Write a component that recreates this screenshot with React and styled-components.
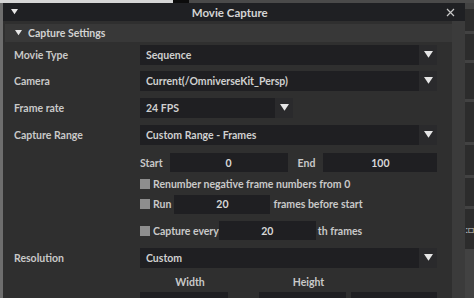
import React from "react";
import styled, { createGlobalStyle } from "styled-components";

const Global = createGlobalStyle`
  html, body {
    margin: 0;
    padding: 0;
    background: #3a3a3a;
    overflow: hidden;
  }
  body {
    font-family: "Lato", "Open Sans", sans-serif;
  }
`;

const Page = styled.div`
  width: 474px;
  height: 298px;
  display: flex;
  flex-direction: column;
  overflow: hidden;
`;

const TopStrip = styled.div`
  height: 3px;
  flex-shrink: 0;
  display: flex;
  > div:nth-child(1) {
    width: 173px;
    background: #d6d6d6;
  }
  > div:nth-child(2) {
    width: 16px;
    background: #0c0c0c;
  }
  > div:nth-child(3) {
    flex: 1;
    background: #4a4a4a;
  }
`;

const Main = styled.div`
  flex: 1;
  display: flex;
  min-height: 0;
`;

const Window = styled.div`
  width: 463px;
  display: flex;
  flex-direction: column;
  border-left: 3px solid #6e6e6e;
`;

const TitleBar = styled.div`
  height: 18px;
  flex-shrink: 0;
  background: #1f2023;
  display: flex;
  align-items: center;
  padding: 0 10px 0 8px;
  color: #d4d4d4;
  font-size: 11.5px;
  font-weight: 700;
`;

const TitleText = styled.div`
  flex: 1;
  text-align: center;
  padding-right: 4px;
`;

const Close = styled.div`
  width: 10px;
  height: 10px;
  display: flex;
  align-items: center;
  justify-content: center;
`;

const Body = styled.div`
  flex: 1;
  display: flex;
  background: #2f2f2f;
  min-height: 0;
  overflow: hidden;
`;

const Content = styled.div`
  flex: 1;
  padding: 3px 0 0 2px;
  display: flex;
  flex-direction: column;
`;

const ScrollTrack = styled.div`
  width: 13px;
  background: #3b3b3b;
`;

const SectionHeader = styled.div`
  height: 18px;
  flex-shrink: 0;
  background: #383838;
  display: flex;
  align-items: center;
  gap: 6px;
  padding-left: 10px;
  color: #d2d2d2;
  font-size: 10.5px;
  font-weight: 700;
`;

const Form = styled.div`
  display: grid;
  grid-template-columns: 126px 297px;
  padding-left: 9px;
  flex-shrink: 0;
`;

const Label = styled.div`
  height: ${(p) => p.h || 27}px;
  display: flex;
  align-items: center;
  color: #c9c9c9;
  font-size: 10.5px;
  font-weight: 700;
`;

const Cell = styled.div`
  height: ${(p) => p.h || 27}px;
  display: flex;
  align-items: center;
`;

const Select = styled.div`
  width: ${(p) => p.w || 297}px;
  height: 20px;
  display: flex;
  background: #1f1f22;
  color: #d0d0d0;
  font-size: 10.5px;
  font-weight: 700;
`;

const SelectValue = styled.div`
  flex: 1;
  display: flex;
  align-items: center;
  padding-left: 6px;
`;

const Arrow = styled.div`
  width: 18px;
  background: #2a2a2c;
  display: flex;
  align-items: center;
  justify-content: center;
`;

const Field = styled.div`
  width: ${(p) => p.w}px;
  height: 19px;
  margin-left: ${(p) => p.ml || 0}px;
  background: #1f1f22;
  color: #d8d8d8;
  font-size: 10.5px;
  font-weight: 700;
  display: flex;
  align-items: center;
  justify-content: center;
  flex-shrink: 0;
`;

const Text = styled.span`
  color: #c9c9c9;
  font-size: 10.5px;
  font-weight: 700;
  white-space: nowrap;
  margin-left: ${(p) => p.ml || 0}px;
`;

const Check = styled.div`
  width: 10px;
  height: 10px;
  background: #8e8e8e;
  margin-right: 3px;
  flex-shrink: 0;
`;

const SizeRow = styled.div`
  display: grid;
  grid-template-columns: 88px 31px 87px 5px 86px;
`;

const SizeCol = styled.div`
  display: flex;
  flex-direction: column;
  align-items: center;
  padding-top: 4px;
  gap: 3px;
  > span {
    height: 14px;
    line-height: 14px;
    transform: translateX(${(p) => p.shift || 0}px);
  }
`;

const Backdrop = styled.div`
  flex: 1;
  background: #424242;
  display: flex;
  flex-direction: column;
  gap: 3px;
  padding-top: 6px;
`;

const BackBox = styled.div`
  height: ${(p) => p.h}px;
  flex-shrink: 0;
  background: #2c2c2c;
  color: #ccc;
  font-size: 10px;
  display: flex;
  align-items: center;
`;

const Tri = ({ size = 8 }) => (
  <svg width={size} height={size * 0.75} viewBox="0 0 8 6">
    <path d="M0 0 L8 0 L4 6 Z" fill="#e6e6e6" />
  </svg>
);

function Dropdown({ value, w }) {
  return (
    <Select w={w}>
      <SelectValue>{value}</SelectValue>
      <Arrow>
        <Tri size={9} />
      </Arrow>
    </Select>
  );
}

export default function App() {
  return (
    <Page>
      <Global />
      <TopStrip>
        <div />
        <div />
        <div />
      </TopStrip>
      <Main>
        <Window>
          <TitleBar>
            <Tri size={7} />
            <TitleText>Movie Capture</TitleText>
            <Close>
              <svg width="9" height="9" viewBox="0 0 9 9">
                <path d="M1 1 L8 8 M8 1 L1 8" stroke="#c8c8c8" strokeWidth="1.2" />
              </svg>
            </Close>
          </TitleBar>
          <Body>
            <Content>
              <SectionHeader>
                <Tri size={7} />
                Capture Settings
              </SectionHeader>
              <Form>
                <Label h={25}>Movie Type</Label>
                <Cell h={25}>
                  <Dropdown value="Sequence" />
                </Cell>
                <Label>Camera</Label>
                <Cell>
                  <Dropdown value="Current(/OmniverseKit_Persp)" />
                </Cell>
                <Label>Frame rate</Label>
                <Cell>
                  <Dropdown value="24 FPS" w={153} />
                </Cell>
                <Label>Capture Range</Label>
                <Cell>
                  <Dropdown value="Custom Range - Frames" />
                </Cell>
                <Label h={96} />
                <div>
                  <Cell h={29}>
                    <Text>Start</Text>
                    <Field w={118} ml={7}>0</Field>
                    <Text ml={10}>End</Text>
                    <Field w={114} ml={8}>100</Field>
                  </Cell>
                  <Cell h={14}>
                    <Check />
                    <Text>Renumber negative frame numbers from 0</Text>
                  </Cell>
                  <Cell h={26}>
                    <Check />
                    <Text>Run</Text>
                    <Field w={96} ml={3}>20</Field>
                    <Text ml={3}>frames before start</Text>
                  </Cell>
                  <Cell h={27}>
                    <Check />
                    <Text>Capture every</Text>
                    <Field w={97} ml={0}>20</Field>
                    <Text ml={2}>th frames</Text>
                  </Cell>
                </div>
                <Label>Resolution</Label>
                <Cell>
                  <Dropdown value="Custom" />
                </Cell>
                <Label />
                <SizeRow>
                  <SizeCol shift={6}>
                    <Text>Width</Text>
                    <Field w={88} />
                  </SizeCol>
                  <div />
                  <SizeCol shift={6}>
                    <Text>Height</Text>
                    <Field w={87} />
                  </SizeCol>
                  <div />
                  <SizeCol>
                    <Text>&nbsp;</Text>
                    <Field w={86} />
                  </SizeCol>
                </SizeRow>
              </Form>
            </Content>
            <ScrollTrack />
          </Body>
        </Window>
        <Backdrop>
          <BackBox h={22} />
          <BackBox h={26} />
          <BackBox h={36} />
          <BackBox h={40} />
          <BackBox h={30} />
          <BackBox h={28} />
          <BackBox h={40}>:&#9633;</BackBox>
        </Backdrop>
      </Main>
    </Page>
  );
}
